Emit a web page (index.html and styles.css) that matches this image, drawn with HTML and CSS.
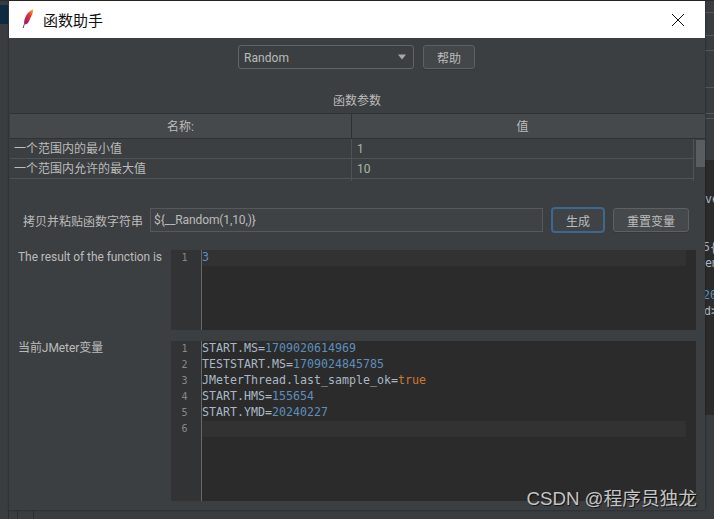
FILE: index.html
```html
<!DOCTYPE html>
<html lang="zh">
<head>
<meta charset="utf-8">
<title>函数助手</title>
<link rel="stylesheet" href="styles.css">
</head>
<body>
<div class="desk">
  <div class="desk-tab"></div>
  <div class="desk-lines">
    <i class="l1"></i><i class="l2"></i><i class="l3"></i><i class="l4"></i><i class="l5"></i><i class="l6"></i>
  </div>
  <div class="desk-dark"></div>
  <div class="desk-code">
    <span class="f1">ve</span><span class="f2">5{</span><span class="f3">em</span><span class="f4">20</span><span class="f5">d&gt;</span>
  </div>
  <div class="desk-foot"><i></i><i></i><i></i></div>
</div>
<main class="window">
  <header class="titlebar">
    <svg class="feather" width="12" height="20" viewBox="0 0 12 20">
      <defs><linearGradient id="fg" x1="0.8" y1="0" x2="0.2" y2="1">
        <stop offset="0" stop-color="#f9a51d"/><stop offset="0.35" stop-color="#e5392c"/><stop offset="0.75" stop-color="#bd1f58"/><stop offset="1" stop-color="#7d2a78"/>
      </linearGradient></defs>
      <path d="M11 0.2C11.6 2 10.6 4.6 9 7.8L6.4 13.6C5.4 15 3.6 15.8 2.2 15.4C1.8 12.6 2.6 9.2 4.4 6C6 3.4 8.8 1 11 0.2Z" fill="url(#fg)"/>
      <path d="M2.2 15.4L1.2 19" stroke="#55305f" stroke-width="0.9" fill="none"/>
    </svg>
    <h1 class="title">函数助手</h1>
    <svg class="close" width="14" height="14" viewBox="0 0 14 14"><path d="M1 1L13 13M13 1L1 13" stroke="#111" stroke-width="1" fill="none"/></svg>
  </header>
  <div class="content">
    <div class="toolbar">
      <div class="combo"><span class="combo-text">Random</span><svg width="10" height="6" viewBox="0 0 10 6"><path d="M1 0.5H9L5 5.5Z" fill="#a8a8a8"/></svg></div>
      <button class="btn help">帮助</button>
    </div>
    <div class="section">函数参数</div>
    <div class="table">
      <div class="thead">
        <div class="th c1">名称:</div>
        <div class="th c2">值</div>
      </div>
      <div class="tbody">
        <div class="rows">
          <div class="row"><div class="td c1">一个范围内的最小值</div><div class="td c2 val">1</div></div>
          <div class="row"><div class="td c1">一个范围内允许的最大值</div><div class="td c2 val">10</div></div>
          <div class="row row-cut"><div class="td c1"></div><div class="td c2"></div></div>
        </div>
        <div class="scroll"><div class="thumb"></div></div>
      </div>
    </div>
    <div class="form">
      <label class="form-label">拷贝并粘贴函数字符串</label>
      <div class="input">${__Random(1,10,)}</div>
      <button class="btn primary">生成</button>
      <button class="btn reset">重置变量</button>
    </div>
    <section class="pane pane-a">
      <div class="pane-label">The result of the function is</div>
      <div class="editor">
        <div class="gutter"><div>1</div></div>
        <div class="code">
          <div class="line active"><b class="n">3</b></div>
        </div>
      </div>
    </section>
    <section class="pane pane-b">
      <div class="pane-label">当前JMeter变量</div>
      <div class="editor">
        <div class="gutter"><div>1</div><div>2</div><div>3</div><div>4</div><div>5</div><div>6</div></div>
        <div class="code">
          <div class="line">START.MS=<b class="n">1709020614969</b></div>
          <div class="line">TESTSTART.MS=<b class="n">1709024845785</b></div>
          <div class="line">JMeterThread.last_sample_ok=<b class="k">true</b></div>
          <div class="line">START.HMS=<b class="n">155654</b></div>
          <div class="line">START.YMD=<b class="n">20240227</b></div>
          <div class="line active"></div>
        </div>
      </div>
    </section>
  </div>
</main>
<div class="watermark">CSDN @程序员独龙</div>
</body>
</html>
```
FILE: styles.css
```css
* { box-sizing: border-box; }
html, body { margin: 0; padding: 0; }
body {
  width: 714px; height: 519px; overflow: hidden; position: relative;
  background: #3a3d40;
  font-family: Roboto, "Noto Sans CJK SC", sans-serif;
  font-size: 12px; color: #bbbbbb;
}
.desk { position: absolute; inset: 0; background: #3a3d40; }
.desk::before { content: ""; position: absolute; left: 0; right: 0; top: 0; height: 1px; background: #2b2b2b; }
.desk-tab { position: absolute; left: 0; top: 5px; width: 8px; height: 19px; background: #0e2b42; }
.desk-lines i { position: absolute; left: 705px; width: 9px; height: 1px; background: #55585a; }
.desk-lines .l1 { top: 12px; } .desk-lines .l2 { top: 35px; } .desk-lines .l3 { top: 50px; }
.desk-lines .l4 { top: 87px; } .desk-lines .l5 { top: 113px; } .desk-lines .l6 { top: 118px; }
.desk-dark { position: absolute; left: 705px; top: 160px; width: 9px; height: 255px; background: #2b2b2b; }
.desk-code { position: absolute; left: 705px; top: 0; width: 9px; height: 519px; overflow: hidden; font: 11.6px "DejaVu Sans Mono", monospace; color: #a9b7c6; }
.desk-code span { position: absolute; left: -1px; line-height: 16px; }
.desk-code .f1 { top: 191px; left: 0; } .desk-code .f2 { top: 239px; left: -2px; } .desk-code .f3 { top: 255px; left: 0; }
.desk-code .f4 { top: 287px; left: -2px; color: #5c8fbd; } .desk-code .f5 { top: 303px; left: -1px; }
.desk-foot { position: absolute; left: 0; right: 0; bottom: 0; height: 9px; background: #3a3d40; }
.desk-foot i { position: absolute; top: 0; width: 1px; height: 9px; background: #2c2e30; }
.desk-foot i:nth-child(1) { left: 8px; } .desk-foot i:nth-child(2) { left: 17px; } .desk-foot i:nth-child(3) { left: 33px; }

.window {
  position: absolute; left: 9px; top: 1px; width: 696px; height: 509px;
  background: #3c3f41; display: flex; flex-direction: column;
  box-shadow: 0 0 2px rgba(0,0,0,.5);
}
.titlebar { height: 37px; background: #fff; display: flex; align-items: center; flex: none; padding-left: 13px; padding-right: 20px; }
.feather { flex: none; margin-right: 9px; margin-top: -1px; }
.title { margin: 0; font-size: 15px; font-weight: 400; color: #111; line-height: 37px; flex: 1; font-family: "Noto Sans CJK SC", sans-serif; }
.close { flex: none; }

.content { flex: 1; display: flex; flex-direction: column; }
.toolbar { display: flex; justify-content: flex-start; padding: 7px 0 0 229px; gap: 9px; height: 31px; }
.combo {
  width: 176px; height: 24px; border: 1px solid #646464; border-radius: 3px;
  display: flex; align-items: center; justify-content: space-between; padding: 0 6px 0 5px;
  color: #bbb;
}
.combo-text { line-height: 24px; padding-top: 2px; letter-spacing: .05px; }
.btn {
  font: inherit; color: #bbb; background: #43474a; border: 1px solid #5e6163; border-radius: 3px;
  height: 24px; padding: 0; box-shadow: 0 1px 0 #35383a;
}
.help { width: 52px; }
.section { text-align: center; margin-top: 24px; height: 16px; line-height: 16px; }
.table { margin: 4px 0 0 1px; border-top: 1px solid #2f3235; }
.thead { display: flex; height: 25px; background: #45494b; border-bottom: 1px solid #2f3235; }
.th { text-align: center; line-height: 27px; color: #bbb; }
.c1 { width: 342px; flex: none; }
.c2 { flex: 1; }
.thead .c2 { padding-right: 12px; }
.thead .c1 { border-right: 1px solid #2f3235; }
.tbody { display: flex; height: 42px; }
.rows { flex: 1; }
.row { display: flex; height: 20px; border-bottom: 1px solid #505356; }
.row-cut { height: 2px; border-bottom: 0; }
.td { line-height: 20px; padding-left: 4px; white-space: nowrap; }
.row .c1 { border-right: 1px solid #505356; }
.row .c2 { padding-left: 5px; }
.val { color: #a6b8a8; }
.scroll { width: 12px; flex: none; border-left: 1px solid #505356; padding: 1px 1px 0 1px; }
.thumb { height: 27px; background: #5a5d5f; width: 9px; margin-left: 1px; }

.form { display: flex; align-items: center; margin-top: 26px; height: 26px; padding-left: 14px; }
.form-label { width: 127px; flex: none; white-space: nowrap; }
.input { width: 393px; height: 24px; border: 1px solid #565859; line-height: 22px; padding-left: 3px; flex: none; background: #3f4244; letter-spacing: -.1px; }
.primary { width: 54px; height: 26px; margin-left: 8px; border: 2px solid #3e668f; border-radius: 4px; background: #3f4346; box-shadow: none; }
.reset { width: 76px; margin-left: 8px; background: #46494b; }

.pane { display: flex; padding: 0 9px; }
.pane-a { margin-top: 17px; height: 80px; }
.pane-b { margin-top: 11px; height: 160px; }
.pane-label { width: 153px; flex: none; white-space: nowrap; line-height: 15px; letter-spacing: -.07px; }
.editor { flex: 1; display: flex; background: #2b2b2b; font: 11.63px/15px "DejaVu Sans Mono", monospace; }
.gutter { width: 31px; flex: none; background: #313335; border-right: 1px solid #65686a; color: #888; text-align: center; padding-right: 3px; font-size: 10px; }
.gutter div { height: 16px; }
.code { flex: 1; padding-right: 10px; color: #a9b7c6; }
.line { height: 16px; white-space: pre; }
.active { background: #323232; }
.n { font-weight: 400; color: #5c8fbd; }
.k { font-weight: 400; color: #cc7832; }

.watermark {
  position: absolute; right: 17px; top: 488px; font-size: 18.7px; line-height: 22px;
  font-family: "Liberation Sans", "Noto Sans CJK SC", sans-serif;
  color: #c4c4c4; text-shadow: 1px 1px 1px rgba(0,0,0,.7);
}
```
